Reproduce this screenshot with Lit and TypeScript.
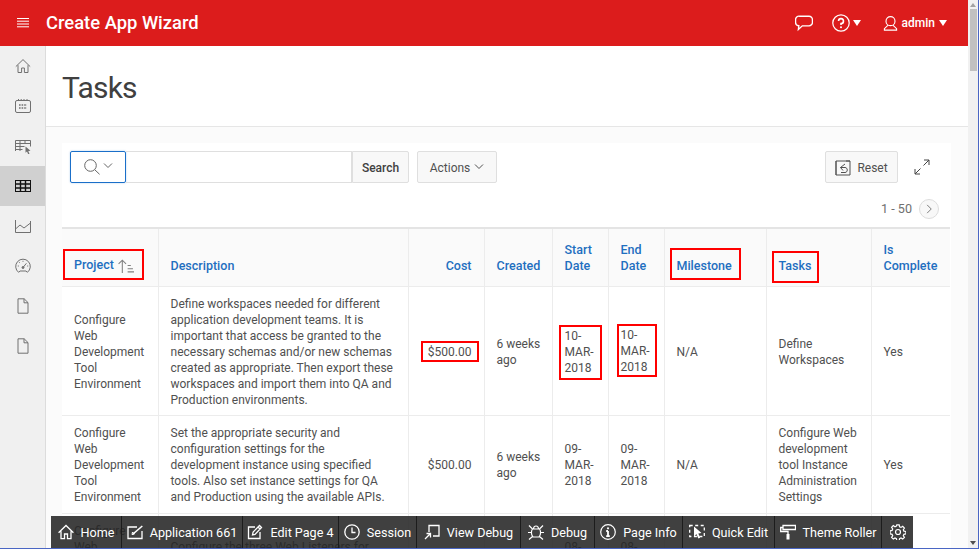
import { LitElement, html, css, svg } from "lit";
import { customElement } from "lit/decorators.js";

const ico = (body: unknown, size = 16, vb = 16) => html`<svg
  width=${size}
  height=${size}
  viewBox="0 0 ${vb} ${vb}"
  fill="none"
  stroke="currentColor"
  stroke-width="1"
>
  ${body}
</svg>`;

const icons = {
  home: svg`<path d="M.8 8.6 8 1.6l7.2 7M3 7.2v7.3h3.6V10h2.8v4.5H13V7.2"/>`,
  calendar: svg`<rect x=".5" y="2.5" width="15" height="12" rx="1.5"/><path d="M3.5 1v2M6.2 1v2M9 1v2M12 1v2"/><path stroke-width="1.6" stroke-dasharray="1.6 1" d="M4 7h8M4 10h8"/>`,
  report: svg`<path d="M.5 13V2.5h15v6M.5 5.5h15M.5 8.5h9M.5 11.5h7M5 2.5v10.5M10 2.5v3"/><path fill="currentColor" stroke="none" d="M10.5 8.5l5 4.2-2.2.2 1.2 3-1.3.4-1.2-2.9-1.5 1.3z"/>`,
  grid: svg`<rect x=".5" y="2.5" width="15" height="11"/><path stroke-width="1.4" d="M.5 6h15M.5 10h15M5.5 2.5v11M10.500 2.500v11"/>`,
  chart: svg`<path d="M.5 2v12.5h15V3M.5 11l4.500-4 4 3 6.500-5"/>`,
  gauge: svg`<path d="M3.6 14.3A7.3 7.3 0 1 1 12.4 14.3L11 13H5z"/><path d="M8 9.5l3.4-4.2M2.8 8h1M12.2 8h1M8 2.8v1M4.3 4.3l.7.7"/><circle cx="8" cy="9.5" r="1" fill="currentColor"/>`,
  page: svg`<path d="M3 .8h6.2L13 4.6v10.6H3zM9 .8v4h4"/>`,
  menu: svg`<path d="M2 3.500h12M2 6.200h12M2 9h12M2 11.800h12"/>`,
  chat: svg`<path d="M4 2h8.500A3 3 0 0 1 15.500 5v2.500A3 3 0 0 1 12.500 10.500H6.500L3 13.800l.4-3.400A3 3 0 0 1 .5 7.500V5A3 3 0 0 1 4 2z" stroke-width="1.200"/>`,
  help: svg`<circle cx="8" cy="8" r="7.300" stroke-width="1.100"/><path stroke-width="1.400" d="M5.800 6.200A2.200 2.200 0 1 1 8 8.500v1.200"/><circle cx="8" cy="11.800" r=".9" fill="currentColor" stroke="none"/>`,
  user: svg`<circle cx="8" cy="5.500" r="4.800" stroke-width="1.200"/><path stroke-width="1.200" d="M5.500 9.800 1.500 13.500v1.500h13v-1.500L10.500 9.800"/>`,
  search: svg`<circle cx="6.500" cy="6.500" r="5.800"/><path d="m10.800 10.800 4.800 4.500"/>`,
  chevron: svg`<path d="M1 1.500 5 5.500l4-4"/>`,
  reset: svg`<path d="M6 1H1v14h14V1h-4M15 1H6M1 1v14"/><path d="M10 4 5.500 7.500 10 7.500c3 0 3 5 0 5H6M5.500 7.500 8 10.500"/>`,
  expand: svg`<path d="M9.500 6.500 15 1M10 1h5v5M6.500 9.500 1 15M1 10v5h5"/>`,
  next: svg`<path d="M5.500 2.500 11 8l-5.500 5.500"/>`,
  arrowUp: svg`<path d="M5 15V3M1.500 6.500 5 3l3.500 3.500"/><path d="M10 8h3M10 11h5M10 14h6"/>`,
  barHome: svg`<path stroke-width="1.300" d="M.6 8.800 8 1.500l7.400 7.300M3 7.200v7.500h3.500V10h3v4.700H13V7.200"/>`,
  app: svg`<path stroke-width="1.300" d="M10 3H1v11.500h14V7"/><path stroke-width="1.600" d="M6 10l9.300-8"/><path d="m5.500 8 2 2-2.500.6z"/>`,
  edit: svg`<path stroke-width="1.300" d="M8 3H1.500v11.500H13V8"/><path stroke-width="1.300" d="M5.500 11l.6-3L12.500 1.500l2 2L8 10.500zM11 3l2 2"/>`,
  clock: svg`<circle cx="8" cy="8" r="7.200" stroke-width="1.300"/><path stroke-width="1.300" d="M8 3.500V8.500h3.500"/>`,
  debugView: svg`<path stroke-width="1.300" d="M5 8V1.500h10V12H9M1 15l5.500-5.500M2.500 9.500h4v4"/>`,
  bug: svg`<path stroke-width="1.200" d="M4.500 5h7C13 7 13 11 11 13H5C3 11 3 7 4.500 5zM1 1.500l3.500 3.500M15 1.500 11.500 5M0 8.500h3.500M16 8.500h-3.500M1 15.500 4.500 12.500M15 15.500l-3.500-3M5.500 5c0-4 5-4 5 0"/>`,
  info: svg`<circle cx="8" cy="8" r="7.300" stroke-width="1.200"/><path stroke-width="1.800" d="M8 7v5M6.200 7H8M6.200 12.200h3.600"/><circle cx="8" cy="4.300" r="1.100" fill="currentColor" stroke="none"/>`,
  quick: svg`<path stroke-width="1.300" stroke-dasharray="3 2.500" d="M.700 1.500h14.600v11H.700z"/><path fill="currentColor" stroke="none" d="M5 2.500l7.500 6.600-3.200.3 1.900 4.400-1.900.8-1.900-4.500L5 12.800z"/>`,
  roller: svg`<path stroke-width="1.300" d="M3 1.500h12.500v4H3zM3 3.500H.7v4H8V10"/><rect x="6.500" y="10" width="3" height="5.500" fill="currentColor" stroke="none"/>`,
  gear: svg`<circle cx="8" cy="8" r="2.500" stroke-width="1.200"/><path stroke-width="1.200" d="M6.800.8h2.400l.4 2 1.400.6 1.700-1.100 1.700 1.700-1.100 1.700.6 1.400 2 .4v2.400l-2 .4-.6 1.400 1.100 1.700-1.700 1.700-1.700-1.100-1.400.6-.4 2H6.800l-.4-2-1.400-.6-1.700 1.100-1.700-1.700 1.100-1.700-.6-1.400-2-.4V6.800l2-.4.6-1.400-1.100-1.700 1.700-1.700 1.700 1.100 1.400-.6z"/>`,
};

const navItems = [
  icons.home,
  icons.calendar,
  icons.report,
  icons.grid,
  icons.chart,
  icons.gauge,
  icons.page,
  icons.page,
];

const devBar = [
  { icon: icons.barHome, label: "Home", width: 71 },
  { icon: icons.app, label: "Application 661", width: 121 },
  { icon: icons.edit, label: "Edit Page 4", width: 96 },
  { icon: icons.clock, label: "Session", width: 78 },
  { icon: icons.debugView, label: "View Debug", width: 104 },
  { icon: icons.bug, label: "Debug", width: 74 },
  { icon: icons.info, label: "Page Info", width: 88 },
  { icon: icons.quick, label: "Quick Edit", width: 92 },
  { icon: icons.roller, label: "Theme Roller", width: 107 },
  { icon: icons.gear, label: "", width: 31 },
];

const rows = [
  {
    project: "Configure\nWeb\nDevelopment\nTool\nEnvironment",
    description:
      "Define workspaces needed for different\napplication development teams. It is\nimportant that access be granted to the\nnecessary schemas and/or new schemas\ncreated as appropriate. Then export these\nworkspaces and import them into QA and\nProduction environments.",
    cost: "$500.00",
    created: "6 weeks\nago",
    start: "10-\nMAR-\n2018",
    end: "10-\nMAR-\n2018",
    milestone: "N/A",
    task: "Define\nWorkspaces",
    complete: "Yes",
    marked: true,
  },
  {
    project: "Configure\nWeb\nDevelopment\nTool\nEnvironment",
    description:
      "Set the appropriate security and\nconfiguration settings for the\ndevelopment instance using specified\ntools. Also set instance settings for QA\nand Production using the available APIs.",
    cost: "$500.00",
    created: "6 weeks\nago",
    start: "09-\nMAR-\n2018",
    end: "09-\nMAR-\n2018",
    milestone: "N/A",
    task: "Configure Web\ndevelopment\ntool Instance\nAdministration\nSettings",
    complete: "Yes",
    marked: false,
  },
  {
    project: "Configure\nWeb\nDevelopment\nTool\nEnvironment",
    description:
      "Configure the three Web Listeners for\nHR, OE, and PA, as appropriate for\nthe respective environments.",
    cost: "$500.00",
    created: "6 weeks\nago",
    start: "08-\nMAR-\n2018",
    end: "08-\nMAR-\n2018",
    milestone: "N/A",
    task: "Configure Web\nListeners",
    complete: "Yes",
    marked: false,
  },
];

@customElement("app-root")
export class AppRoot extends LitElement {
  static styles = css`
    :host {
      display: block;
      width: 979px;
      height: 550px;
      overflow: hidden;
      position: relative;
      background: #fff;
      font-family: Roboto, "Open Sans", sans-serif;
      font-size: 12px;
      line-height: 16px;
      color: #404040;
    }
    svg {
      display: block;
      flex: none;
    }
    .window {
      display: flex;
      height: 548px;
      border-bottom: 1px solid #4a66c4;
      border-right: 1px solid #4a66c4;
      width: 978px;
    }
    .page {
      flex: 1;
      min-width: 0;
      display: flex;
      flex-direction: column;
      position: relative;
      overflow: hidden;
    }
    .scrollbar {
      width: 10px;
      background: #f1f1f1;
      display: flex;
      flex-direction: column;
      align-items: center;
      flex: none;
    }
    .scroll-up {
      margin-top: 3px;
      border: 3px solid transparent;
      border-top: 0;
      border-bottom: 4px solid #a3a3a3;
    }
    .scroll-thumb {
      margin-top: 2px;
      width: 7px;
      height: 62px;
      background: #c1c1c1;
    }
    .scroll-down {
      margin-top: auto;
      margin-bottom: 3px;
      border: 3px solid transparent;
      border-bottom: 0;
      border-top: 4px solid #505050;
    }
    header {
      height: 46px;
      flex: none;
      background: #dc1c1c;
      color: #fff;
      display: flex;
      align-items: center;
    }
    .burger {
      width: 46px;
      display: flex;
      justify-content: center;
    }
    .app-name {
      font-size: 18.4px;
      font-weight: 500;
    }
    .head-right {
      margin-left: auto;
      display: flex;
      align-items: center;
      font-weight: 500;
      font-size: 12px;
    }
    .caret {
      width: 0;
      height: 0;
      border: 4.5px solid transparent;
      border-bottom: 0;
      border-top: 6px solid #fff;
    }
    .chat {
      margin-right: 19px;
    }
    .help {
      margin-right: 22px;
      display: flex;
      align-items: center;
      gap: 3px;
    }
    .user {
      margin-right: 21px;
      display: flex;
      align-items: center;
      gap: 4px;
    }
    .body {
      flex: 1;
      min-height: 0;
      display: flex;
    }
    nav {
      width: 45px;
      flex: none;
      background: #f0f0f0;
      border-right: 1px solid #dcdcdc;
      color: #707070;
    }
    .nav-item {
      height: 40px;
      display: flex;
      align-items: center;
      justify-content: center;
    }
    .nav-item.active {
      background: #d0d0d0;
      color: #111;
    }
    main {
      flex: 1;
      min-width: 0;
      background: #fbfbfb;
    }
    .title-bar {
      height: 80px;
      background: #fff;
      border-bottom: 1px solid #e6e6e6;
      display: flex;
      align-items: center;
      padding-left: 16px;
    }
    h1 {
      margin: 0;
      font-size: 30px;
      font-weight: 400;
      line-height: 40px;
      letter-spacing: -0.8px;
      position: relative;
      top: 2px;
    }
    .region {
      margin: 16px 17px 0 16px;
      background: #fff;
    }
    .search-row {
      display: flex;
      align-items: center;
      padding: 8px 8px 0;
    }
    .search-type {
      width: 56px;
      height: 32px;
      box-sizing: border-box;
      border: 1px solid #1a6fc9;
      border-radius: 2px;
      box-shadow: 0 0 2px rgba(26, 111, 201, 0.35);
      display: flex;
      align-items: center;
      justify-content: center;
      gap: 3px;
      color: #666;
    }
    .search-input {
      width: 226px;
      height: 32px;
      box-sizing: border-box;
      border: 1px solid #dfdfdf;
      border-left: 0;
    }
    .btn {
      height: 32px;
      box-sizing: border-box;
      border: 1px solid #dfdfdf;
      background: #f8f8f8;
      display: flex;
      align-items: center;
      justify-content: center;
      padding-top: 1px;
      color: #505050;
      border-radius: 2px;
    }
    .btn-search {
      width: 57px;
      font-weight: 500;
      border-radius: 0 2px 2px 0;
      color: #404040;
    }
    .btn-actions {
      width: 80px;
      margin-left: 8px;
      gap: 4px;
    }
    .btn-reset {
      width: 73px;
      margin-left: auto;
      gap: 6px;
    }
    .expand {
      margin: 0 13px 0 16px;
      color: #444;
    }
    .pager {
      height: 20px;
      margin-top: 16px;
      padding-right: 12px;
      display: flex;
      justify-content: flex-end;
      align-items: center;
      gap: 7px;
      font-size: 12.6px;
      color: #707070;
    }
    .pager-next {
      width: 20px;
      height: 20px;
      box-sizing: border-box;
      border: 1px solid #ddd;
      border-radius: 50%;
      background: #f8f8f8;
      display: flex;
      align-items: center;
      justify-content: center;
      color: #555;
    }
    table {
      margin-top: 8px;
      width: 888px;
      table-layout: fixed;
      border-collapse: collapse;
      border-top: 2px solid #e4e4e4;
    }
    th {
      height: 58px;
      box-sizing: border-box;
      background: #fafafa;
      vertical-align: bottom;
      text-align: left;
      padding: 0 12px 12px;
      font-size: 12.5px;
      font-weight: 500;
      color: #1f6fc0;
      border-right: 1px solid #ececec;
      border-bottom: 1px solid #ececec;
    }
    td {
      padding: 9px 12px 7px;
      vertical-align: middle;
      white-space: pre;
      color: #505050;
      border-right: 1px solid #ececec;
      border-bottom: 1px solid #ececec;
    }
    tr + tr td {
      padding-top: 9px;
      padding-bottom: 8px;
    }
    th:last-child,
    td:last-child {
      border-right: 0;
    }
    .num {
      text-align: right;
    }
    .sort {
      display: inline-flex;
      align-items: center;
      gap: 3px;
    }
    .sort svg {
      color: #808080;
    }
    .mark {
      display: inline-block;
      border: 2px solid #f00;
      vertical-align: top;
    }
    .mark-project {
      padding: 6px 8px 4px 9px;
      margin: -8px -10px -6px -11px;
    }
    .mark-milestone {
      padding: 8px 7px 4px 5px;
      margin: -10px -9px -6px -7px;
    }
    .mark-tasks {
      padding: 5px 6px 7px 5px;
      margin: -7px -8px -9px -7px;
    }
    .mark-cost {
      padding: 1px 5px 0 5px;
      margin: -3px -7px -2px -7px;
    }
    .mark-start {
      padding: 1px 6px 2px 4px;
      margin: -3px -8px -4px -6px;
    }
    .mark-end {
      padding: 1px 5px 0 2px;
      margin: -3px -7px 0 -4px;
    }
    .dev-bar {
      position: absolute;
      left: 51px;
      top: 516px;
      height: 32px;
      display: flex;
      background: rgba(38, 38, 38, 0.88);
      color: #fff;
      font-size: 12.6px;
      white-space: nowrap;
    }
    .dev-item {
      box-sizing: border-box;
      display: flex;
      align-items: center;
      justify-content: center;
      gap: 7px;
      border-right: 1px solid #1c1c1c;
    }
    .dev-item span {
      padding-top: 2px;
    }
    .dev-item:last-child {
      border-right: 0;
    }
  `;

  private renderRow(r: (typeof rows)[number]) {
    const wrap = (text: string, cls: string) =>
      r.marked ? html`<span class="mark ${cls}">${text}</span>` : text;
    return html`<tr>
      <td>${r.project}</td>
      <td>${r.description}</td>
      <td class="num">${wrap(r.cost, "mark-cost")}</td>
      <td>${r.created}</td>
      <td>${wrap(r.start, "mark-start")}</td>
      <td>${wrap(r.end, "mark-end")}</td>
      <td>${r.milestone}</td>
      <td>${r.task}</td>
      <td>${r.complete}</td>
    </tr>`;
  }

  render() {
    return html`
      <div class="window">
        <div class="page">
          <header>
            <div class="burger">${ico(icons.menu)}</div>
            <div class="app-name">Create App Wizard</div>
            <div class="head-right">
              <div class="chat">${ico(icons.chat, 18)}</div>
              <div class="help">${ico(icons.help, 18)}<span class="caret"></span></div>
              <div class="user">${ico(icons.user, 15)}<span>admin</span><span class="caret"></span></div>
            </div>
          </header>
          <div class="body">
            <nav>
              ${navItems.map(
                (icon, i) => html`<div class="nav-item ${i === 3 ? "active" : ""}">${ico(icon)}</div>`,
              )}
            </nav>
            <main>
              <div class="title-bar"><h1>Tasks</h1></div>
              <div class="region">
                <div class="search-row">
                  <div class="search-type">${ico(icons.search)}${ico(icons.chevron, 10, 10)}</div>
                  <div class="search-input"></div>
                  <div class="btn btn-search">Search</div>
                  <div class="btn btn-actions">Actions ${ico(icons.chevron, 10, 10)}</div>
                  <div class="btn btn-reset">${ico(icons.reset)}Reset</div>
                  <div class="expand">${ico(icons.expand)}</div>
                </div>
                <div class="pager">
                  <span>1 - 50</span>
                  <div class="pager-next">${ico(icons.next, 12)}</div>
                </div>
                <table>
                  <colgroup>
                    <col style="width:96px" />
                    <col style="width:250px" />
                    <col style="width:76px" />
                    <col style="width:68px" />
                    <col style="width:56px" />
                    <col style="width:56px" />
                    <col style="width:102px" />
                    <col style="width:105px" />
                    <col style="width:79px" />
                  </colgroup>
                  <thead>
                    <tr>
                      <th>
                        <span class="mark mark-project"
                          ><span class="sort">Project ${ico(icons.arrowUp, 17)}</span></span
                        >
                      </th>
                      <th>Description</th>
                      <th class="num">Cost</th>
                      <th>Created</th>
                      <th>Start Date</th>
                      <th>End Date</th>
                      <th><span class="mark mark-milestone">Milestone</span></th>
                      <th><span class="mark mark-tasks">Tasks</span></th>
                      <th>Is Complete</th>
                    </tr>
                  </thead>
                  <tbody>
                    ${rows.map((r) => this.renderRow(r))}
                  </tbody>
                </table>
              </div>
            </main>
          </div>
          <div class="dev-bar">
            ${devBar.map(
              (d) => html`<div class="dev-item" style="width:${d.width}px">
                ${ico(d.icon)}${d.label ? html`<span>${d.label}</span>` : ""}
              </div>`,
            )}
          </div>
        </div>
        <div class="scrollbar">
          <span class="scroll-up"></span>
          <span class="scroll-thumb"></span>
          <span class="scroll-down"></span>
        </div>
      </div>
    `;
  }
}
